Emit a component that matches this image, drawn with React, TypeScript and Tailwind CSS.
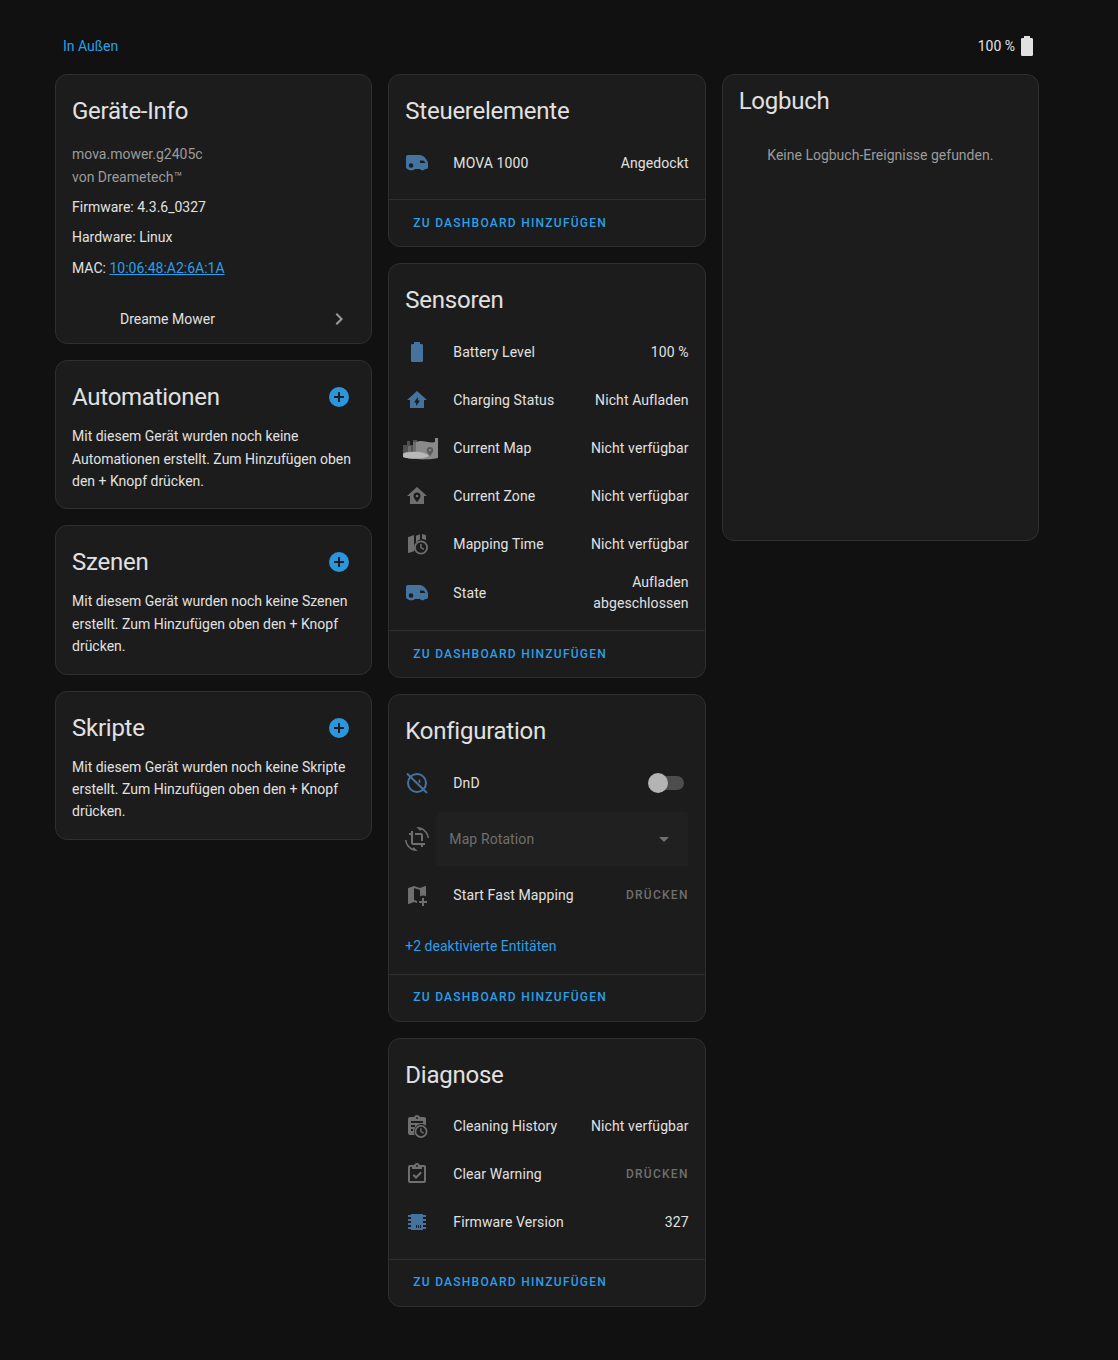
import type { ReactNode } from "react";

const BLUE = "#44739e";
const GRAY = "#6f6f6f";

const paths = {
  battery: "M16.67,4H15V2H9V4H7.33A1.33,1.33 0 0,0 6,5.33V20.67C6,21.4 6.6,22 7.33,22H16.67A1.33,1.33 0 0,0 18,20.67V5.33C18,4.6 17.4,4 16.67,4Z",
  van: "M3,4H14C18,4 20.5,6.5 22,9.5L23,12V16C23,17.5 22,18 21,18H20C19.5,19 18.5,19.2 17.5,19.2C16.5,19.2 15.5,19 15,18H10C9.2,18.9 7.8,19.3 6.5,19.3C4.6,19.3 3.2,18.9 2.5,18C1.5,17.8 1,17 1,16V6C1,4.8 1.8,4 3,4M15,9.5V12H20.4C19.8,10.8 19,9.5 17.5,9.5H15M6,12.2A2.3,2.3 0 1,0 6,16.8A2.3,2.3 0 1,0 6,12.2Z",
  homeBolt: "M12,3L2,12H5V20H19V12H22L12,3M12.8,9V12.4H15L11.2,18V14.4H9L12.8,9Z",
  homeMarker: "M12,3L2,12H5V20H19V12H22L12,3M12,8.5A3.5,3.5 0 0,1 15.5,12C15.5,14.3 12,18 12,18C12,18 8.5,14.3 8.5,12A3.5,3.5 0 0,1 12,8.5M12,10.7A1.3,1.3 0 1,0 12,13.3A1.3,1.3 0 1,0 12,10.7Z",
  mapClock: "M3.36,4.9L9,3L9,16C9,17 9.2,18 9.6,19L3.66,20.97C3.3,21.1 3,20.9 3,20.5V5.38C3,5.15 3.15,4.97 3.36,4.9M11,3.7L15,2.2V7.4C12.6,8 11,9.9 11,12.4V3.7M17,2L20.34,3C20.7,3.1 21,3.3 21,3.7V8.2C19.8,7.5 18.5,7 17,7V2M16,8.5A7,7 0 1,1 16,22.5A7,7 0 0,1 16,8.5M16,10.3A5.2,5.2 0 1,0 16,20.7A5.2,5.2 0 0,0 16,10.3M15.2,12H16.7V15.3L19.2,16.8L18.5,18L15.2,16.1V12Z",
  mapPlus: "M9,3L15,5.1L20.34,3C20.7,2.9 21,3.1 21,3.5V13.3C20.1,12.8 19.1,12.5 18,12.5C16.9,12.5 15.9,12.8 15,13.3V7.11L9,5V16.89L12.1,18C12,18.3 12,18.7 12,19C12,19.3 12,19.6 12.1,20L9,18.9L3.66,20.97C3.3,21.1 3,20.9 3,20.5V5.38C3,5.15 3.15,4.97 3.36,4.9L9,3M17,15H19V18H22V20H19V23H17V20H14V18H17V15Z",
  cropRotate: "M7.47,21.5C4.2,19.93 1.86,16.76 1.5,13H0C0.5,19.16 5.66,24 11.95,24C12.18,24 12.39,24 12.61,23.97L8.8,20.15L7.47,21.5M12.05,0C11.82,0 11.61,0 11.39,0.04L15.2,3.85L16.53,2.5C19.8,4.07 22.14,7.24 22.5,11H24C23.5,4.84 18.34,0 12.05,0M16,14H18V8C18,6.89 17.1,6 16,6H10V8H16V14M8,16V4H6V6H4V8H6V16A2,2 0 0,0 8,18H16V20H18V18H20V16H8Z",
  clipboardClock: "M19,3H14.82C14.4,1.84 13.3,1 12,1C10.7,1 9.6,1.84 9.18,3H5A2,2 0 0,0 3,5V19A2,2 0 0,0 5,21H9.6C9.2,20 9,19 9,18C9,14 12,10 16,10C17.9,10 19.6,10.6 21,11.7V5A2,2 0 0,0 19,3M12,3A1,1 0 0,1 13,4A1,1 0 0,1 12,5A1,1 0 0,1 11,4A1,1 0 0,1 12,3M6,7H18V9H6V7M6,11H10V13H6V11M6,15H8V17H6V15M16,11A6.5,6.5 0 1,0 16,24A6.5,6.5 0 0,0 16,11M16,12.8A4.7,4.7 0 1,1 16,22.2A4.7,4.7 0 0,1 16,12.8M15.2,14.2H16.6V17.2L19,18.6L18.3,19.7L15.2,17.9V14.2Z",
  clipboardCheck: "M19,3H14.82C14.4,1.84 13.3,1 12,1C10.7,1 9.6,1.84 9.18,3H5A2,2 0 0,0 3,5V19A2,2 0 0,0 5,21H19A2,2 0 0,0 21,19V5A2,2 0 0,0 19,3M12,3A1,1 0 0,1 13,4A1,1 0 0,1 12,5A1,1 0 0,1 11,4A1,1 0 0,1 12,3M7,7H17V5H19V19H5V5H7V7M7.5,13.5L9,12L11,14L15.5,9.5L17,11L11,17L7.5,13.5Z",
  chip: "M6,4H18V5H21V7H18V9H21V11H18V13H21V15H18V17H21V19H18V20H6V19H3V17H6V15H3V13H6V11H3V9H6V7H3V5H6V4M11,15V18H12V15H11M13,15V18H14V15H13M15,15V18H16V15H15Z",
  plusCircle: "M12,2A10,10 0 0,0 2,12A10,10 0 0,0 12,22A10,10 0 0,0 22,12A10,10 0 0,0 12,2M17,13H13V17H11V13H7V11H11V7H13V11H17V13Z",
  chevron: "M8.59,16.58L13.17,12L8.59,7.41L10,6L16,12L10,18L8.59,16.58Z",
};

function Icon({ d, color }: { d: string; color: string }) {
  return (
    <svg viewBox="0 0 24 24" className="h-6 w-6 shrink-0" fill={color} fillRule="evenodd">
      <path d={d} />
    </svg>
  );
}

function DndIcon() {
  return (
    <svg viewBox="0 0 24 24" className="h-6 w-6 shrink-0" fill="none" stroke={BLUE} strokeWidth="2">
      <circle cx="12" cy="12" r="9" />
      <path d="M2 2.5L22 22" />
      <path d="M14.5 8.5V12" strokeWidth="1.6" />
    </svg>
  );
}

function MapPicture() {
  return (
    <svg viewBox="0 0 36 24" className="ml-[-3px] mr-[-9px] h-6 w-9 shrink-0">
      <path d="M1 9H5V5H8V9H11V4H15V18H1Z" fill="#505050" />
      <path d="M6 10H9V17H6ZM11 6H14V17H11Z" fill="#6c6c6c" />
      <path d="M14 6C20 3 28 8 33 6V2H36V22C30 24 8 24 1 21V17C5 15 12 16 14 16Z" fill="#8a8a8a" />
      <path d="M1 18C4 16 12 15.5 17 16C22 16.5 25 18 27 20C24 23 8 23.5 1 21Z" fill="#b8b8b8" />
      <path d="M28 11A3.2 3.2 0 0 1 31.2 14.2C31.2 16.5 28 20 28 20C28 20 24.8 16.5 24.8 14.2A3.2 3.2 0 0 1 28 11Z" fill="#5c5c5c" />
      <circle cx="28" cy="14.2" r="1.1" fill="#8a8a8a" />
    </svg>
  );
}

function Card({ title, action, children }: { title: string; action?: ReactNode; children: ReactNode }) {
  return (
    <div className="rounded-xl border border-[#2f2f2f] bg-[#1c1c1c]">
      <div className="flex items-center justify-between pl-4 pr-[20px] pt-5">
        <h2 className="text-2xl leading-8 font-normal tracking-[-0.25px] text-[#e1e1e1]">{title}</h2>
        {action}
      </div>
      {children}
    </div>
  );
}

function Row({ icon, label, children }: { icon: ReactNode; label: string; children?: ReactNode }) {
  return (
    <div className="flex min-h-12 items-center py-1 pl-4 pr-4 tracking-[0.1px]">
      {icon}
      <div className="ml-6 flex-1 text-[#e1e1e1]">{label}</div>
      {children}
    </div>
  );
}

function Value({ children }: { children: ReactNode }) {
  return <div className="text-right leading-[21px] text-[#e1e1e1]">{children}</div>;
}

function Press() {
  return <div className="text-xs font-medium tracking-[1.25px] text-[#6f6f6f]">DRÜCKEN</div>;
}

function AddToDashboard({ lift }: { lift?: boolean }) {
  return (
    <div
      className={
        "flex h-[47px] items-center border-t border-[#2f2f2f] pl-6 text-xs font-medium tracking-[1.25px] text-[#2b9fe8] " +
        (lift ? "pb-0.5" : "")
      }
    >
      ZU DASHBOARD HINZUFÜGEN
    </div>
  );
}

function EmptyCard({ title, text }: { title: string; text: string }) {
  return (
    <Card title={title} action={<Icon d={paths.plusCircle} color="#2b96dc" />}>
      <p className="px-4 pt-3 pb-4 leading-[22.4px] text-[#e1e1e1]">{text}</p>
    </Card>
  );
}

export default function App() {
  return (
    <div className="min-h-[1360px] bg-[#111111] pl-[55px] pr-[79px] font-[family-name:Roboto,sans-serif] text-sm">
      <div className="flex h-[74px] items-start justify-between pt-[34px] pl-2">
        <div className="leading-6 text-[#2b9fe8]">In Außen</div>
        <div className="flex items-center text-[#e1e1e1]">
          100 %
          <Icon d={paths.battery} color="#e1e1e1" />
        </div>
      </div>

      <div className="grid grid-cols-3 items-start gap-4">
        <div className="flex flex-col gap-4">
          <Card title="Geräte-Info">
            <div className="px-4 pt-4 leading-[23px] text-[#9b9b9b]">
              <div>mova.mower.g2405c</div>
              <div>von Dreametech™</div>
            </div>
            <div className="flex flex-col gap-2 px-4 pt-[7px] leading-[22.4px] text-[#e1e1e1]">
              <div>Firmware: 4.3.6_0327</div>
              <div>Hardware: Linux</div>
              <div>
                MAC: <span className="text-[#2b9fe8] underline">10:06:48:A2:6A:1A</span>
              </div>
            </div>
            <div className="mt-4 flex h-12 items-center pl-16 pr-5 text-[#e1e1e1]">
              <div className="flex-1">Dreame Mower</div>
              <Icon d={paths.chevron} color="#9b9b9b" />
            </div>
          </Card>
          <EmptyCard
            title="Automationen"
            text="Mit diesem Gerät wurden noch keine Automationen erstellt. Zum Hinzufügen oben den + Knopf drücken."
          />
          <EmptyCard
            title="Szenen"
            text="Mit diesem Gerät wurden noch keine Szenen erstellt. Zum Hinzufügen oben den + Knopf drücken."
          />
          <EmptyCard
            title="Skripte"
            text="Mit diesem Gerät wurden noch keine Skripte erstellt. Zum Hinzufügen oben den + Knopf drücken."
          />
        </div>

        <div className="flex flex-col gap-4">
          <Card title="Steuerelemente">
            <div className="pt-3 pb-3">
              <Row icon={<Icon d={paths.van} color={BLUE} />} label="MOVA 1000">
                <Value>Angedockt</Value>
              </Row>
            </div>
            <AddToDashboard />
          </Card>

          <Card title="Sensoren">
            <div className="pt-3 pb-3">
              <Row icon={<Icon d={paths.battery} color={BLUE} />} label="Battery Level">
                <Value>100 %</Value>
              </Row>
              <Row icon={<Icon d={paths.homeBolt} color={BLUE} />} label="Charging Status">
                <Value>Nicht Aufladen</Value>
              </Row>
              <Row icon={<MapPicture />} label="Current Map">
                <Value>Nicht verfügbar</Value>
              </Row>
              <Row icon={<Icon d={paths.homeMarker} color={GRAY} />} label="Current Zone">
                <Value>Nicht verfügbar</Value>
              </Row>
              <Row icon={<Icon d={paths.mapClock} color={GRAY} />} label="Mapping Time">
                <Value>Nicht verfügbar</Value>
              </Row>
              <Row icon={<Icon d={paths.van} color={BLUE} />} label="State">
                <Value>
                  Aufladen
                  <br />
                  abgeschlossen
                </Value>
              </Row>
            </div>
            <AddToDashboard />
          </Card>

          <Card title="Konfiguration">
            <div className="pt-3">
              <Row icon={<DndIcon />} label="DnD">
                <div className="relative mr-[5px] h-3.5 w-[34px] rounded-full bg-[#4d4d4d]">
                  <div className="absolute top-[-3px] left-[-2px] h-5 w-5 rounded-full bg-[#b4b4b4]" />
                </div>
              </Row>
              <div className="flex h-16 items-center pl-4 pr-[17px] tracking-[0.1px]">
                <Icon d={paths.cropRotate} color={GRAY} />
                <div className="ml-2 flex h-[54px] flex-1 items-center justify-between rounded-t bg-[#202020] pl-3 pr-[19px] text-[#6f6f6f]">
                  <span>Map Rotation</span>
                  <span className="h-0 w-0 border-x-[5px] border-t-[5px] border-x-transparent border-t-[#6f6f6f]" />
                </div>
              </div>
              <Row icon={<Icon d={paths.mapPlus} color={GRAY} />} label="Start Fast Mapping">
                <Press />
              </Row>
              <div className="mt-[17px] mb-[18px] pl-4 leading-5 text-[#2b9fe8]">+2 deaktivierte Entitäten</div>
            </div>
            <AddToDashboard lift />
          </Card>

          <Card title="Diagnose">
            <div className="pt-[11px] pb-[13px]">
              <Row icon={<Icon d={paths.clipboardClock} color={GRAY} />} label="Cleaning History">
                <Value>Nicht verfügbar</Value>
              </Row>
              <Row icon={<Icon d={paths.clipboardCheck} color={GRAY} />} label="Clear Warning">
                <Press />
              </Row>
              <Row icon={<Icon d={paths.chip} color={BLUE} />} label="Firmware Version">
                <Value>327</Value>
              </Row>
            </div>
            <AddToDashboard lift />
          </Card>
        </div>

        <div className="h-[467px] rounded-xl border border-[#2f2f2f] bg-[#1c1c1c]">
          <h2 className="px-4 pt-2.5 text-2xl leading-8 font-normal tracking-[-0.25px] text-[#e1e1e1]">Logbuch</h2>
          <p className="pt-[28px] text-center leading-5 text-[#9b9b9b]">Keine Logbuch-Ereignisse gefunden.</p>
        </div>
      </div>
    </div>
  );
}
